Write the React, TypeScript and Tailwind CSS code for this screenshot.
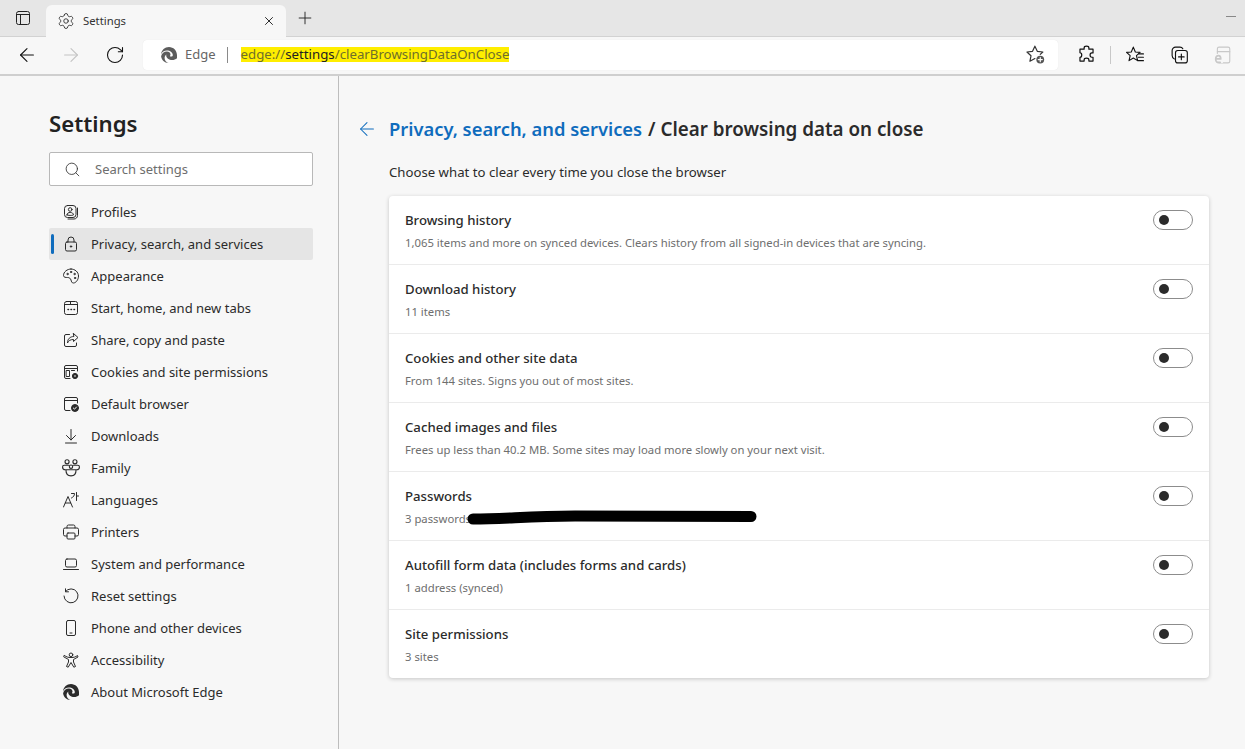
import { ArrowLeft, ArrowRight, Plus, RotateCw, Search, Settings, X } from "lucide-react";
import type { ReactNode } from "react";

const font = "font-['Noto_Sans','Open_Sans',sans-serif]";

function Ico({ children, size = 16, className = "" }: { children: ReactNode; size?: number; className?: string }) {
  return (
    <svg
      width={size}
      height={size}
      viewBox="0 0 16 16"
      fill="none"
      stroke="currentColor"
      strokeWidth="1"
      strokeLinecap="round"
      strokeLinejoin="round"
      className={className}
    >
      {children}
    </svg>
  );
}

function EdgeLogo({ size = 16, className = "" }: { size?: number; className?: string }) {
  return (
    <svg width={size} height={size} viewBox="0 0 16 16" className={className} fill="currentColor">
      <path d="M8 0C3.8 0 .4 3.2 0 7.3 .9 5 3.2 3.4 5.9 3.4c3 0 5.9 2 5.9 4.500 0 1-.6 1.600-1.600 1.600-.8 0-1.200-.3-1.300-.6.4-.3.6-.8.6-1.400 0-1.600-1.700-2.900-3.600-2.900C3 4.600.8 6.600.1 9.300c.3 3.700 3.500 6.700 7.400 6.700-2.200-.6-3.900-2.500-3.900-4.900 0-1.500.7-2.900 1.800-3.700-.1.300-.2.600-.2 1 0 2.600 2.800 4.600 6 4.600 1.800 0 3.400-.6 4.800-1.800 0-.1 0-.1 0-.2V8c0-4.400-3.600-8-8-8z" />
    </svg>
  );
}

const navItems: { label: string; icon: ReactNode; active?: boolean }[] = [
  {
    label: "Profiles",
    icon: (
      <Ico>
        <rect x="1.500" y="1.500" width="11.500" height="12" rx="3" />
        <circle cx="7.200" cy="5.500" r="1.800" />
        <path d="M4 11c0-2 1.500-2.500 3.200-2.500s3.200.5 3.200 2.500c0 .6-6.400.6-6.400 0z" />
        <path d="M14.500 4v7.500c0 2-1.500 3.500-3.500 3.500H5" />
      </Ico>
    ),
  },
  {
    label: "Privacy, search, and services",
    active: true,
    icon: (
      <Ico>
        <rect x="2.500" y="6" width="11" height="9" rx="1.500" />
        <path d="M5 6V4a3 3 0 0 1 6 0v2" />
        <circle cx="8" cy="10.500" r=".7" fill="currentColor" />
      </Ico>
    ),
  },
  {
    label: "Appearance",
    icon: (
      <Ico>
        <path d="M8 1c4 0 7.500 3 7.500 7 0 3.500-2.500 7-5 7-2 0-2-1.500-2.500-3-.5-1.500-1.500-2.500-3.500-2.500-1.500 0-4 0-4-2C.5 4 4 1 8 1z" />
        <circle cx="4.500" cy="6" r=".7" />
        <circle cx="8" cy="4" r=".7" />
        <circle cx="11.500" cy="6" r=".7" />
        <circle cx="12" cy="10" r=".7" />
      </Ico>
    ),
  },
  {
    label: "Start, home, and new tabs",
    icon: (
      <Ico>
        <rect x="1.500" y="1.500" width="13" height="13" rx="2" />
        <path d="M1.500 4.500h6v-3M7.500 4.500h7" />
        <path d="M5 9.500h.5M8 9.500h.5M11 9.500h.5" strokeWidth="1.500" />
      </Ico>
    ),
  },
  {
    label: "Share, copy and paste",
    icon: (
      <Ico>
        <path d="M6.500 2.500H3a1.500 1.500 0 0 0-1.500 1.500v9A1.500 1.500 0 0 0 3 14.500h9a1.500 1.500 0 0 0 1.500-1.500v-2" />
        <path d="M10.500 1.500l4.500 4-4.500 4V7.500c-3 0-5 1-6 3.500 0-4 2.500-6.500 6-6.500z" />
      </Ico>
    ),
  },
  {
    label: "Cookies and site permissions",
    icon: (
      <Ico>
        <path d="M7 14.500H3A1.500 1.500 0 0 1 1.500 13V3A1.500 1.500 0 0 1 3 1.500h10A1.500 1.500 0 0 1 14.500 3v4" />
        <path d="M1.500 4.500h13" />
        <rect x="3.500" y="6.500" width="3" height="6" />
        <path d="M8.500 6.500h3" />
        <circle cx="12" cy="12" r="2.600" fill="currentColor" />
        <circle cx="12" cy="12" r=".8" fill="#f7f7f7" stroke="none" />
      </Ico>
    ),
  },
  {
    label: "Default browser",
    icon: (
      <Ico>
        <path d="M7 14.500H3A1.500 1.500 0 0 1 1.500 13V3A1.500 1.500 0 0 1 3 1.500h10A1.500 1.500 0 0 1 14.500 3v4" />
        <path d="M1.500 4.500h13" />
        <circle cx="12" cy="12" r="3.500" fill="currentColor" />
        <path d="M10.300 12l1.200 1.200 2-2.200" stroke="#f7f7f7" />
      </Ico>
    ),
  },
  {
    label: "Downloads",
    icon: (
      <Ico>
        <path d="M8 1.500v10.500M3.500 7.500L8 12l4.500-4.500M2.500 15h11" />
      </Ico>
    ),
  },
  {
    label: "Family",
    icon: (
      <Ico size={18} className="-mx-px">
        <circle cx="4.500" cy="2.500" r="1.800" />
        <circle cx="11.500" cy="2.500" r="1.800" />
        <circle cx="8" cy="6.800" r="1.500" />
        <path d="M6 5.500H2c-1 0-1.500.5-1.500 1.500 0 1.500 1 2.500 2.500 2.500M10 5.500h4c1 0 1.500.5 1.500 1.500 0 1.500-1 2.500-2.500 2.500" />
        <path d="M3.500 9.500h9c0 3.500-1.500 5.500-4.500 5.500s-4.500-2-4.500-5.500z" />
      </Ico>
    ),
  },
  {
    label: "Languages",
    icon: (
      <Ico>
        <path d="M.5 15L5 4.500 9.500 15M2.300 11h5.400" />
        <path d="M8.500 1.500h3c0 2-1 3.500-3 4.500M13.500.5v8M13.500 4h2" />
      </Ico>
    ),
  },
  {
    label: "Printers",
    icon: (
      <Ico>
        <path d="M4 4V2.500A1.500 1.500 0 0 1 5.500 1h5A1.500 1.500 0 0 1 12 2.500V4" />
        <path d="M4 12H2a1.500 1.500 0 0 1-1.500-1.500v-5A1.500 1.500 0 0 1 2 4h12a1.500 1.500 0 0 1 1.500 1.500v5A1.500 1.500 0 0 1 14 12h-2" />
        <rect x="4" y="9" width="8" height="6" rx="1" />
      </Ico>
    ),
  },
  {
    label: "System and performance",
    icon: (
      <Ico>
        <rect x="2.500" y="3" width="11" height="8" rx="1.500" />
        <path d="M.5 13.500h15" />
      </Ico>
    ),
  },
  {
    label: "Reset settings",
    icon: (
      <Ico>
        <path d="M2.500 3.500A7 7 0 1 1 1 8" />
        <path d="M2.500 .8v3h3" />
      </Ico>
    ),
  },
  {
    label: "Phone and other devices",
    icon: (
      <Ico>
        <rect x="3.500" y=".5" width="9" height="15" rx="1.500" />
        <path d="M7 13h2" />
      </Ico>
    ),
  },
  {
    label: "Accessibility",
    icon: (
      <Ico>
        <circle cx="8" cy="2.800" r="1.800" />
        <path d="M1.500 3.500c2 1.500 3.500 2 6.500 2s4.500-.5 6.500-2l.5 1.500-4.500 2.500v2.500l2 4.500-1.700.7L8 10.500l-2.800 4.700-1.700-.7 2-4.500V7.500L1 5z" />
      </Ico>
    ),
  },
  { label: "About Microsoft Edge", icon: <EdgeLogo /> },
];

const rows = [
  { title: "Browsing history", sub: "1,065 items and more on synced devices. Clears history from all signed-in devices that are syncing." },
  { title: "Download history", sub: "11 items" },
  { title: "Cookies and other site data", sub: "From 144 sites. Signs you out of most sites." },
  { title: "Cached images and files", sub: "Frees up less than 40.2 MB. Some sites may load more slowly on your next visit." },
  { title: "Passwords", sub: "3 passwords", scribble: true },
  { title: "Autofill form data (includes forms and cards)", sub: "1 address (synced)" },
  { title: "Site permissions", sub: "3 sites" },
];

function TabStrip() {
  return (
    <div className="flex h-[37px] items-end bg-[#e6e6e6] border-b border-[#d2d2d2]">
      <div className="flex h-[37px] w-[46px] items-center justify-center text-[#222]">
        <Ico>
          <rect x="1.500" y="1.500" width="13" height="13" rx="2" />
          <path d="M1.500 4.500h13M5.500 4.500v10" />
        </Ico>
      </div>
      <div className="flex h-[32px] w-[240px] items-center rounded-t-[6px] bg-[#f7f7f7] pl-[11px] pr-[10px] relative top-px">
        <Settings size={18} strokeWidth={1.1} className="text-[#222]" />
        <span className="ml-[8px] flex-1 text-[11.300px] text-[#333]">Settings</span>
        <X size={14} strokeWidth={1.5} className="text-[#111]" />
      </div>
      <div className="flex h-[37px] w-[36px] items-center justify-center text-[#222] pl-[1px]">
        <Plus size={20} strokeWidth={1.1} />
      </div>
      <div className="ml-auto mr-[9px] mb-[19px] h-px w-[10px] bg-[#888]" />
    </div>
  );
}

function Toolbar() {
  return (
    <div className="flex h-[39px] items-center bg-[#f7f7f7] border-b-2 border-[#cfcfcf] pb-[2px]">
      <div className="flex w-[143px] items-center text-[#111]">
        <ArrowLeft size={22} strokeWidth={1.2} className="ml-[16px]" />
        <ArrowRight size={22} strokeWidth={1.2} className="ml-[22px] text-[#c4c4c4]" />
        <RotateCw size={20} strokeWidth={1.3} className="ml-[23px]" />
      </div>
      <div className="flex h-[30px] w-[915px] items-center rounded-[4px] bg-white pl-[18px] pr-[13px] shadow-[0_0_1px_rgba(0,0,0,0.1)]">
        <EdgeLogo className="text-[#5c5c5c]" />
        <span className="ml-[8px] text-[13px] text-[#666]">Edge</span>
        <span className="ml-[11px] h-[16px] w-px bg-[#8a8a8a]" />
        <span className="ml-[13px] bg-[#ffee00] text-[13.250px] leading-[15px] text-[#6f6f2a]">
          edge://<span className="text-[#222]">settings</span>/clearBrowsingDataOnClose
        </span>
        <Ico size={19} className="ml-auto text-[#333]">
          <path d="M7.500 1l2 4.300 4.700.6-2.200 2M7.500 1L5.500 5.300.8 5.900l3.400 3.200-.9 4.600 4.200-2.300" />
          <circle cx="12" cy="12.300" r="3.300" fill="#555" stroke="none" />
          <path d="M12 10.600v3.400M10.300 12.300h3.400" stroke="#fff" />
        </Ico>
      </div>
      <div className="flex flex-1 items-center text-[#111]">
        <Ico size={19} className="ml-[19px]">
          <path d="M6 2.500c0-2 4-2 4 0v1h3.500v3.200h-1c-2 0-2 3.600 0 3.600h1v3.200H10v-1c0-2-4-2-4 0v1H2.500v-3.200c2 0 2-3.800 0-3.800V3.500H6z" />
        </Ico>
        <span className="ml-[14px] h-[18px] w-px bg-[#c8c8c8]" />
        <Ico size={18} className="ml-[15px]">
          <path d="M6.500 1l1.800 4.300 4.200.4-3.200 2.900 1 4.400-3.800-2.300-3.800 2.300 1-4.400L.5 5.700l4.200-.4z" />
          <path d="M11.500 7h4M11 10h4.500M10.800 13h4.700" />
        </Ico>
        <Ico size={18} className="ml-[27px]">
          <path d="M3 11.500C1.800 11 1 10 1 8.500V4c0-1.500 1.500-3 3-3h4c1 0 2 .5 2.500 1.500" />
          <rect x="4" y="4" width="10.500" height="11" rx="2" />
          <path d="M9.200 7.200v5M6.700 9.700h5" />
        </Ico>
        <Ico size={18} className="ml-[25px] text-[#c8c8c8]">
          <rect x="3" y="1" width="11" height="14" rx="1.500" />
          <path d="M3 5h11" />
          <rect x="1" y="7" width="7" height="8" fill="#f7f7f7" stroke="none" />
          <path d="M2 11.500h4c0-2-.7-3-2-3s-2.500 1-2.500 3.300S2.700 15 5.500 14.500" strokeWidth="1.500" />
        </Ico>
      </div>
    </div>
  );
}

function Sidebar() {
  return (
    <aside className="w-[339px] shrink-0 border-r border-[#bdbdbd] pl-[49px] pr-[25px] pt-[32px]">
      <h1 className="text-[22.200px] leading-[32px] font-semibold text-[#222]">Settings</h1>
      <div className="mt-[12px] flex h-[34px] items-center rounded-[2px] border border-[#b8b8b8] bg-white pl-[14px]">
        <Search size={17} strokeWidth={1.2} className="text-[#333]" />
        <span className="ml-[14px] text-[13px] leading-[20px] text-[#6e6e6e]">Search settings</span>
      </div>
      <nav className="mt-[10px]">
        {navItems.map((item) => (
          <div
            key={item.label}
            className={`relative flex h-[32px] items-center rounded-[2px] pl-[14px] text-[#2b2b2b] ${item.active ? "bg-[#e5e5e5]" : ""}`}
          >
            {item.active && <span className="absolute left-[2px] top-[6px] h-[20px] w-[3px] rounded-full bg-[#0f6cbd]" />}
            {item.icon}
            <span className="ml-[12px] pt-[2px] text-[13px]">{item.label}</span>
          </div>
        ))}
      </nav>
    </aside>
  );
}

function Toggle() {
  return (
    <span className="flex h-[20px] w-[40px] shrink-0 items-center rounded-full border border-[#8c8c8c] bg-white pl-[5px]">
      <span className="h-[10px] w-[10px] rounded-full bg-[#2b2b2b]" />
    </span>
  );
}

function Row({ title, sub, scribble, last }: { title: string; sub: string; scribble?: boolean; last: boolean }) {
  return (
    <div className={`relative flex justify-between pl-[16px] pr-[16px] pt-[14px] ${last ? "h-[68px]" : "h-[69px] border-b border-[#ebebeb]"}`}>
      <div>
        <div className="text-[13.200px] leading-[20px] font-medium text-[#2b2b2b]">{title}</div>
        <div className="mt-[5px] text-[11.300px] leading-[16px] text-[#6e6e6e]">{sub}</div>
      </div>
      <Toggle />
      {scribble && (
        <svg className="absolute left-[76px] top-[37px]" width="296" height="18" viewBox="0 0 296 18">
          <path d="M8 10C40 10 60 7.500 110 7L286 7.500" stroke="#000" strokeWidth="11" strokeLinecap="round" fill="none" />
        </svg>
      )}
    </div>
  );
}

export default function App() {
  return (
    <div className={`${font} flex h-[749px] w-[1245px] flex-col overflow-hidden bg-[#f7f7f7]`}>
      <TabStrip />
      <Toolbar />
      <div className="flex flex-1">
        <Sidebar />
        <main className="flex-1 pl-[17px] pt-[37px]">
          <div className="flex h-[32px] items-center">
            <ArrowLeft size={22} strokeWidth={1.1} className="text-[#0f6cbd]" />
            <h2 className="ml-[11px] text-[18.800px] font-semibold text-[#2b2b2b]">
              <span className="text-[18.350px] text-[#0f6cbd]">Privacy, search, and services</span>
              <span className="ml-[1px]"> / Clear browsing data on close</span>
            </h2>
          </div>
          <p className="ml-[33px] mt-[17px] text-[13.200px] leading-[20px] text-[#2b2b2b]">Choose what to clear every time you close the browser</p>
          <div className="ml-[33px] mt-[14px] w-[820px] rounded-[4px] bg-white shadow-[0_1px_4px_rgba(0,0,0,0.2)]">
            {rows.map((row, i) => (
              <Row key={row.title} {...row} last={i === rows.length - 1} />
            ))}
          </div>
        </main>
      </div>
    </div>
  );
}
